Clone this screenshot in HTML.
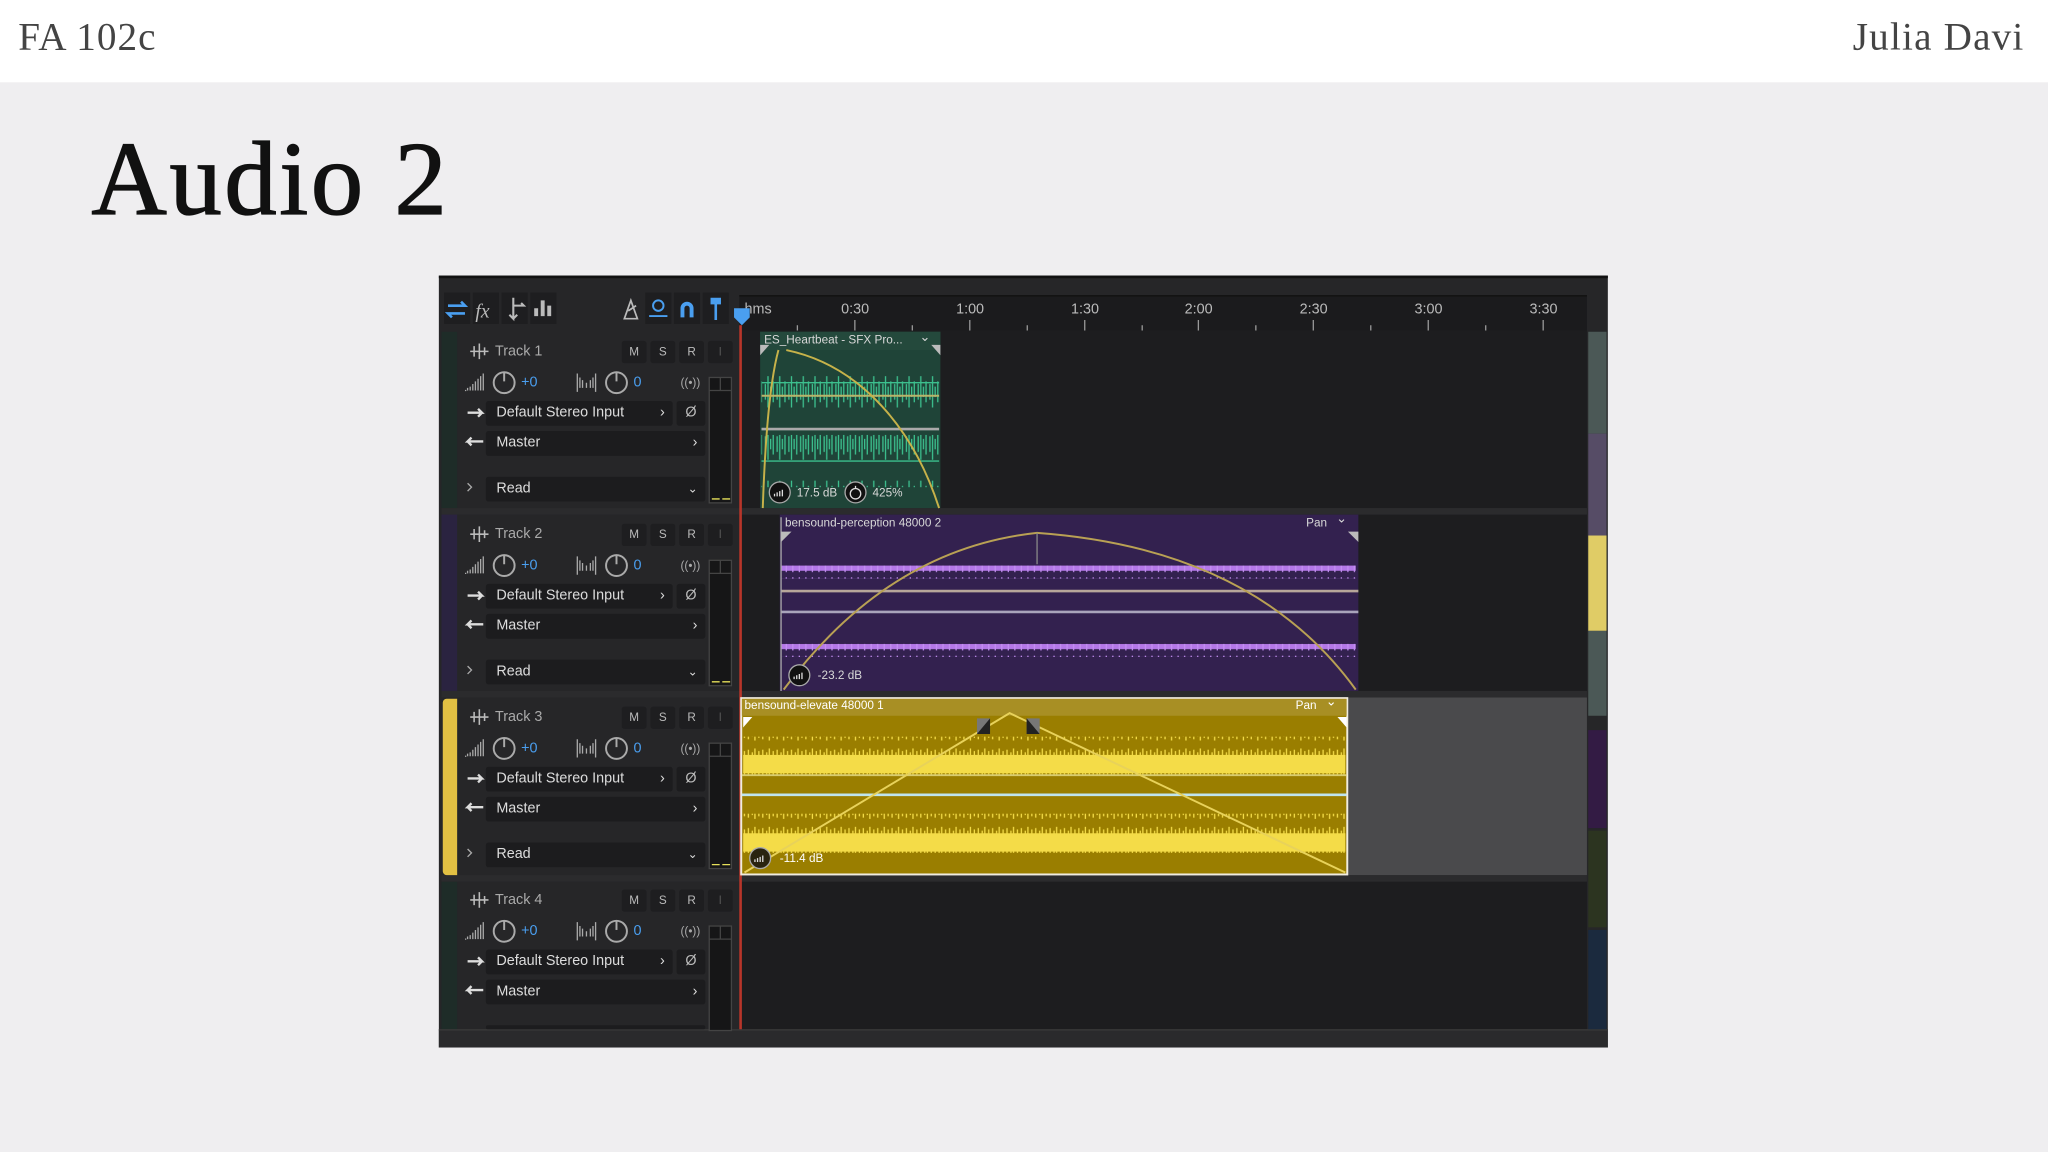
<!DOCTYPE html>
<html><head><meta charset="utf-8"><style>
*{margin:0;padding:0;box-sizing:border-box}
html,body{width:2048px;height:1152px;overflow:hidden;background:#efeff0}
#w{position:absolute;left:0;top:0;width:1568px;height:882px;transform:scale(1.306122);transform-origin:0 0;background:#efeef0;font-family:"Liberation Sans",sans-serif}
.a{position:absolute}
.hdr{left:0;top:0;width:1568px;height:63px;background:#fff}
.ser{font-family:"Liberation Serif",serif}
.ui{color:#d8d8d8;font-size:11px;white-space:nowrap}
.box{position:absolute;background:#1c1c1e;border-radius:2px;color:#ddd;font-size:11px;padding-left:8px;line-height:18px}
.btn{position:absolute;width:19px;height:17px;background:#1e1e20;border-radius:2px;color:#bbb;font-size:9px;text-align:center;line-height:17px}
</style></head><body><div id="w">
<div class="a hdr"></div>
<div class="a ser" style="left:14px;top:12px;font-size:30px;color:#444;letter-spacing:0.8px">FA 102c</div>
<div class="a ser" style="right:18px;top:12px;font-size:30px;color:#444;letter-spacing:0.9px">Julia Davi</div>
<div class="a ser" style="left:70px;top:93px;font-size:80px;color:#111;letter-spacing:2px;-webkit-text-stroke:1px #111">Audio 2</div>

<div class="a" style="left:336px;top:211px;width:895px;height:591px;background:#262628;border-top:2px solid #111"></div>
<div class="a" style="left:566px;top:253px;width:649px;height:536px;background:#1d1d1f"></div>
<div class="a" style="left:566px;top:226px;width:649px;height:27px;background:#1b1b1d;border-top:1px solid #111"></div>
<div class="a" style="left:338px;top:389px;width:877px;height:5px;background:#2b2b2d"></div>
<div class="a" style="left:338px;top:529px;width:877px;height:5px;background:#2b2b2d"></div>
<div class="a" style="left:338px;top:670px;width:877px;height:5px;background:#2b2b2d"></div>
<div class="a" style="left:566px;top:534px;width:649px;height:136px;background:#4a4a4c"></div>
<div class="a" style="left:338px;top:254px;width:12px;height:135px;background:#1e2c28"></div>
<div class="a" style="left:338px;top:394px;width:12px;height:135px;background:#2a2340"></div>
<div class="a" style="left:339px;top:535px;width:11px;height:135px;background:#e2c043;border-radius:3px 0 0 3px"></div>
<div class="a" style="left:338px;top:675px;width:12px;height:113px;background:#1e2c28"></div>
<div class="a" style="left:336px;top:788px;width:895px;height:14px;background:#2a2a2c;border-top:1px solid #3a3a3a"></div>
<div class="a" style="left:1216px;top:254px;width:14px;height:78px;background:#4b5856"></div>
<div class="a" style="left:1216px;top:332px;width:14px;height:78px;background:#564c66"></div>
<div class="a" style="left:1216px;top:410px;width:14px;height:73px;background:#e0cc66"></div>
<div class="a" style="left:1216px;top:483px;width:14px;height:65px;background:#4b5856"></div>
<div class="a" style="left:1216px;top:559px;width:14px;height:75px;background:#331b44"></div>
<div class="a" style="left:1216px;top:636px;width:14px;height:74px;background:#2c3420"></div>
<div class="a" style="left:1216px;top:712px;width:14px;height:76px;background:#1b2a3e"></div>

<svg class="a" style="left:338px;top:222px" width="230" height="30" viewBox="0 0 230 30">
<rect x="2" y="2" width="20" height="24" fill="#1e1e20"/><rect x="24" y="2" width="20" height="24" fill="#1e1e20"/><rect x="46" y="2" width="20" height="24" fill="#1e1e20"/><rect x="68" y="2" width="20" height="24" fill="#1e1e20"/>
<path d="M5 12h13l-3-3M18 18H5l3 3" stroke="#4a9ff0" stroke-width="2" fill="none"/>
<text x="26" y="21" fill="#bbb" font-size="15" font-style="italic" font-family="Liberation Serif">fx</text>
<path d="M55 6v16l-3-3M55 22l3-3M55 12h8l-2-2" stroke="#bbb" stroke-width="1.6" fill="none"/>
<path d="M71 20h3v-6h-3zM76 20h3V8h-3zM81 20h3v-8h-3z" fill="#bbb"/>
<path d="M140 22l5-14 5 14z M143 16l6-4" stroke="#bbb" stroke-width="1.3" fill="none"/>
<rect x="156" y="2" width="20" height="24" fill="#1e1e20"/><rect x="178" y="2" width="20" height="24" fill="#1e1e20"/><rect x="200" y="2" width="20" height="24" fill="#1e1e20"/>
<circle cx="166" cy="12" r="4" stroke="#4a9ff0" stroke-width="1.5" fill="none"/><path d="M159 20h14" stroke="#4a9ff0" stroke-width="1.5"/>
<path d="M183 21v-7a5 5 0 0 1 10 0v7h-3v-7a2 2 0 0 0-4 0v7z" fill="#4a9ff0"/>
<path d="M206 6h8v5h-3v12h-2V11h-3z" fill="#4a9ff0"/>
</svg>
<div class="a ui" style="left:570px;top:231px;color:#bbb">hms</div>
<div class="a ui" style="left:644px;top:231px;color:#bbb">0:30</div>
<div class="a ui" style="left:732px;top:231px;color:#bbb">1:00</div>
<div class="a ui" style="left:820px;top:231px;color:#bbb">1:30</div>
<div class="a ui" style="left:907px;top:231px;color:#bbb">2:00</div>
<div class="a ui" style="left:995px;top:231px;color:#bbb">2:30</div>
<div class="a ui" style="left:1083px;top:231px;color:#bbb">3:00</div>
<div class="a ui" style="left:1171px;top:231px;color:#bbb">3:30</div>
<svg class="a" style="left:560px;top:228px" width="660" height="30">
<g stroke="#999" stroke-width="1">
<path d="M94.5 17v8M182.5 17v8M270.5 17v8M357.5 17v8M445.5 17v8M533.5 17v8M621.5 17v8"/>
<path d="M50.5 21v4M138.5 21v4M226.5 21v4M314.5 21v4M401.5 21v4M489.5 21v4M577.5 21v4"/>
</g>
<path d="M2 8h12v7l-6 6-6-6z" fill="#4a9ff0"/>
</svg>
<div class="a" style="left:566px;top:249px;width:1.5px;height:539px;background:#b8352a"></div>

<svg class="a" style="left:566px;top:253px" width="650" height="420" viewBox="566 253 650 420">
<defs>
<pattern id="pg" width="9" height="40" patternUnits="userSpaceOnUse"><g stroke="#3cc08e" stroke-width="1"><path d="M1 14v12M3 8v24M5 16v8M7 12v16"/></g></pattern>
<pattern id="pp" width="5" height="10" patternUnits="userSpaceOnUse"><path d="M0 3h5v4H0z" fill="#b478e8"/><path d="M2 2v6" stroke="#c28ef0"/></pattern>
<pattern id="py" width="11" height="30" patternUnits="userSpaceOnUse"><path d="M0 8h11v14H0z" fill="#f4dc48"/><g stroke="#f4dc48"><path d="M1 4v22M4 6v18M6 3v24M9 5v20"/></g></pattern>
</defs>
<rect x="582" y="254" width="138" height="135" fill="#1f4438"/>
<rect x="582" y="254" width="138" height="14" fill="#24493c"/>
<rect x="583" y="273" width="136" height="40" fill="url(#pg)"/>
<rect x="583" y="333" width="136" height="40" fill="url(#pg)"/>
<path d="M583 293h136M583 353h136" stroke="#3cc08e"/>
<path d="M583 303h136" stroke="#b9b46a" stroke-width="1.5"/>
<path d="M583 328.5h136" stroke="#aaa" stroke-width="2"/>
<path d="M584 389C586 330 590 290 596 268 M602 268C660 280 700 330 719 389" stroke="#c6b24a" stroke-width="1.5" fill="none"/>
<path d="M582 264l7 0-7 8z M720 264l-7 0 7 8z" fill="#bbb"/>
<rect x="597" y="394" width="443" height="135" fill="#33214f"/>
<rect x="598" y="433" width="440" height="10" fill="url(#pp)"/>
<rect x="598" y="493" width="440" height="10" fill="url(#pp)"/>
<path d="M598 452.5h442" stroke="#b7a69a" stroke-width="2"/>
<path d="M598 468.5h442" stroke="#a9a4bb" stroke-width="2"/>
<path d="M600 528Q680 420 794 408Q960 420 1038 528" stroke="#b9a154" stroke-width="1.5" fill="none"/>
<path d="M794 408v24" stroke="#888"/>
<path d="M598 396v133" stroke="#aaa"/>
<path d="M598 407h8l-8 8z M1040 407h-8l8 8z" fill="#bbb"/>
<rect x="567.5" y="534.5" width="464" height="135" fill="#9a7e00" stroke="#f0ece0" stroke-width="1.5"/>
<rect x="568" y="535" width="463" height="13" fill="#a88f24"/>
<rect x="569" y="564" width="461" height="30" fill="url(#py)"/>
<rect x="569" y="623" width="461" height="30" fill="url(#py)"/>
<path d="M568 593.5h463" stroke="#d8cc70" stroke-width="1.5"/>
<path d="M568 608.5h463" stroke="#bfe4ee" stroke-width="2"/>
<path d="M570 668L773 546L1030 668" stroke="#e8d25a" stroke-width="1.5" fill="none"/>
<path d="M748 550h10v12h-10z M786 550h10v12h-10z" fill="#777"/>
<path d="M748 562l10-12v12z M786 550l10 12h-10z" fill="#222"/>
<path d="M569 549h7l-7 8z M1031 549h-7l7 8z" fill="#fff"/>
<circle cx="597" cy="377" r="8" fill="#111" stroke="#aaa"/><circle cx="655" cy="377" r="8" fill="#111" stroke="#aaa"/>
<circle cx="612" cy="517" r="8" fill="#111" stroke="#aaa"/>
<circle cx="582" cy="657" r="8" fill="#2a2410" stroke="#aaa"/>
<path d="M593 380v-2M595 380v-3M597 380v-4M599 380v-5M608 520v-2M610 520v-3M612 520v-4M614 520v-5M578 660v-2M580 660v-3M582 660v-4M584 660v-5" stroke="#ddd"/>
<circle cx="655" cy="378" r="4" fill="none" stroke="#ddd"/><path d="M655 372v2" stroke="#ddd"/>
</svg>
<div class="a ui" style="left:585px;top:255px;font-size:9px">ES_Heartbeat - SFX Pro...</div>
<div class="a ui" style="left:704px;top:253px;font-size:10px">⌄</div>
<div class="a ui" style="left:610px;top:372px;font-size:9px">17.5 dB</div>
<div class="a ui" style="left:668px;top:372px;font-size:9px">425%</div>
<div class="a ui" style="left:601px;top:395px;font-size:9px">bensound-perception 48000 2</div>
<div class="a ui" style="left:1000px;top:395px;font-size:9px">Pan</div>
<div class="a ui" style="left:1023px;top:392px;font-size:10px">⌄</div>
<div class="a ui" style="left:626px;top:512px;font-size:9px">-23.2 dB</div>
<div class="a ui" style="left:570px;top:535px;font-size:9px;color:#fff">bensound-elevate 48000 1</div>
<div class="a ui" style="left:992px;top:535px;font-size:9px;color:#fff">Pan</div>
<div class="a ui" style="left:1015px;top:532px;font-size:10px;color:#fff">⌄</div>
<div class="a ui" style="left:597px;top:652px;font-size:9px;color:#fff">-11.4 dB</div>

<div id="tracks"></div>
<script>
var h='';
[[255,'Track 1',1],[395,'Track 2',1],[535,'Track 3',1],[675,'Track 4',0]].forEach(function(t){
var T=t[0];
h+='<svg class="a" style="left:354px;top:'+T+'px" width="210" height="135">'
+'<path d="M6 14h14M9 10v8M13 8v12M17 11v6" stroke="#bbb" stroke-width="1.2"/>'
+'<path d="M2 44h1M4 44v-2M6 44v-3M8 44v-5M10 44v-7M12 44v-9M14 44v-11M16 44v-13" stroke="#aaa"/>'
+'<circle cx="32" cy="38" r="8" stroke="#aaa" stroke-width="1.5" fill="none"/><path d="M32 30v7" stroke="#aaa" stroke-width="1.5"/>'
+'<path d="M88 31v14M90 34v8M92 36v6M95 38v4M98 36v6M100 34v8M102 31v14" stroke="#aaa"/>'
+'<circle cx="118" cy="38" r="8" stroke="#aaa" stroke-width="1.5" fill="none"/><path d="M118 30v7" stroke="#aaa" stroke-width="1.5"/>'
+'<path d="M4 61h11l-3-3M15 61l-3 3" stroke="#ddd" stroke-width="1.8" fill="none"/>'
+'<path d="M16 83H4l3-3M4 83l3 3" stroke="#ddd" stroke-width="1.8" fill="none"/>'
+(t[2]?'<path d="M4 115l3 3-3 3" stroke="#aaa" fill="none"/>':'')
+'<rect x="189" y="34" width="17" height="'+(t[2]?96:80)+'" fill="#161617" stroke="#444"/><path d="M197.5 34v10M189 44h17" stroke="#444"/>'
+(t[2]?'<path d="M191 127h6M199 127h6" stroke="#e6e05a"/>':'')
+'</svg>';
h+='<div class="a ui" style="left:379px;top:'+(T+8)+'px;color:#aaa">'+t[1]+'</div>';
h+='<div class="a ui" style="left:399px;top:'+(T+32)+'px;color:#4a9ff0">+0</div>';
h+='<div class="a ui" style="left:485px;top:'+(T+32)+'px;color:#4a9ff0">0</div>';
h+='<div class="a ui" style="left:521px;top:'+(T+33)+'px;color:#aaa;font-size:9px">((•))</div>';
[['M',476],['S',498],['R',520],['I',542]].forEach(function(b){h+='<div class="btn" style="left:'+b[1]+'px;top:'+(T+6)+'px;'+(b[0]=='I'?'color:#555':'')+'">'+b[0]+'</div>';});
h+='<div class="box" style="left:372px;top:'+(T+52)+'px;width:143px;height:19px">Default Stereo Input<span style="position:absolute;right:6px">›</span></div>';
h+='<div class="box" style="left:518px;top:'+(T+52)+'px;width:22px;height:19px;padding:0;text-align:center;color:#bbb">Ø</div>';
h+='<div class="box" style="left:372px;top:'+(T+75)+'px;width:168px;height:19px">Master<span style="position:absolute;right:6px">›</span></div>';
if(t[2])h+='<div class="box" style="left:372px;top:'+(T+110)+'px;width:168px;height:19px">Read<span style="position:absolute;right:6px;font-size:9px">⌄</span></div>';
else h+='<div class="box" style="left:372px;top:'+(T+110)+'px;width:168px;height:3px"></div>';
});
document.getElementById('tracks').innerHTML=h;
</script>
</div></body></html>
